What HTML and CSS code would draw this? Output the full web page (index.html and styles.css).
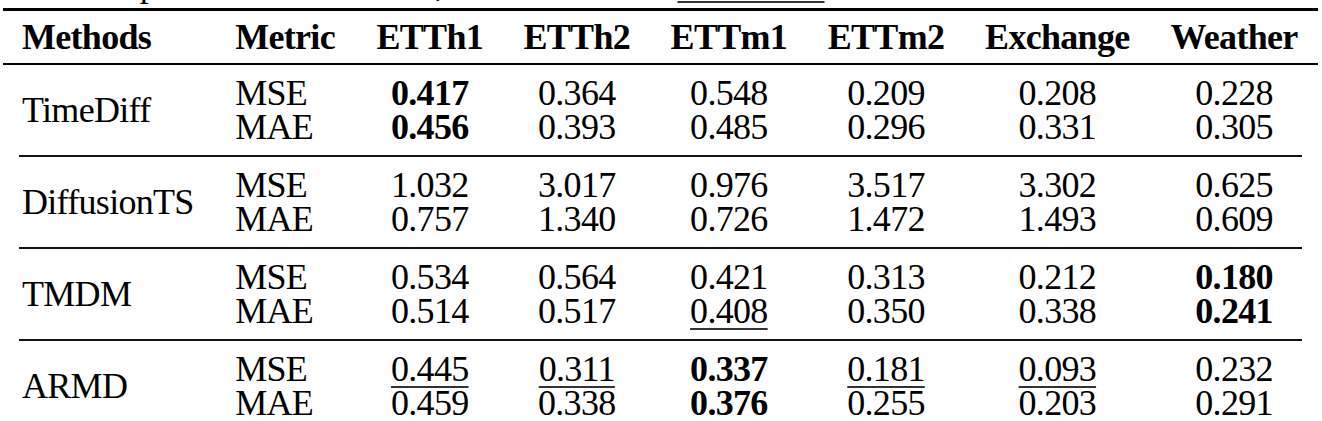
FILE: index.html
```html
<!DOCTYPE html>
<html>
<head>
<meta charset="utf-8">
<title>Results table</title>
<link rel="stylesheet" href="styles.css">
</head>
<body>
<div class="page">
  <p class="caption">tasks compared to the baselines, and second best <u>underlined</u>.</p>
  <table class="results">
    <thead>
      <tr>
        <th class="left">Methods</th>
        <th class="left">Metric</th>
        <th>ETTh1</th>
        <th>ETTh2</th>
        <th>ETTm1</th>
        <th>ETTm2</th>
        <th>Exchange</th>
        <th>Weather</th>
      </tr>
    </thead>
    <tbody>
      <tr class="top">
        <td class="method" rowspan="2">TimeDiff</td>
        <td class="metric">MSE</td>
        <td><b>0.417</b></td><td>0.364</td><td>0.548</td><td>0.209</td><td>0.208</td><td>0.228</td>
      </tr>
      <tr class="bottom">
        <td class="metric">MAE</td>
        <td><b>0.456</b></td><td>0.393</td><td>0.485</td><td>0.296</td><td>0.331</td><td>0.305</td>
      </tr>
      <tr class="sep"><td colspan="8"><div class="rule"></div></td></tr>
      <tr class="top">
        <td class="method" rowspan="2">DiffusionTS</td>
        <td class="metric">MSE</td>
        <td>1.032</td><td>3.017</td><td>0.976</td><td>3.517</td><td>3.302</td><td>0.625</td>
      </tr>
      <tr class="bottom">
        <td class="metric">MAE</td>
        <td>0.757</td><td>1.340</td><td>0.726</td><td>1.472</td><td>1.493</td><td>0.609</td>
      </tr>
      <tr class="sep"><td colspan="8"><div class="rule"></div></td></tr>
      <tr class="top">
        <td class="method" rowspan="2">TMDM</td>
        <td class="metric">MSE</td>
        <td>0.534</td><td>0.564</td><td>0.421</td><td>0.313</td><td>0.212</td><td><b>0.180</b></td>
      </tr>
      <tr class="bottom">
        <td class="metric">MAE</td>
        <td>0.514</td><td>0.517</td><td><u>0.408</u></td><td>0.350</td><td>0.338</td><td><b>0.241</b></td>
      </tr>
      <tr class="sep"><td colspan="8"><div class="rule"></div></td></tr>
      <tr class="top">
        <td class="method" rowspan="2">ARMD</td>
        <td class="metric">MSE</td>
        <td><u>0.445</u></td><td><u>0.311</u></td><td><b>0.337</b></td><td><u>0.181</u></td><td><u>0.093</u></td><td>0.232</td>
      </tr>
      <tr class="bottom">
        <td class="metric">MAE</td>
        <td>0.459</td><td>0.338</td><td><b>0.376</b></td><td>0.255</td><td>0.203</td><td>0.291</td>
      </tr>
    </tbody>
  </table>
</div>
</body>
</html>
```

FILE: styles.css
```css
html, body {
  margin: 0;
  padding: 0;
  background: #ffffff;
  overflow: hidden;
}

.page {
  display: flex;
  flex-direction: column;
  align-items: flex-start;
  font-family: "Liberation Serif", "Times New Roman", serif;
  font-size: 36px;
  line-height: 34px;
  letter-spacing: -0.7px;
  color: #000;
}

.caption {
  margin: -33px 0 7px 3px;
  white-space: nowrap;
}

.caption u,
.results u {
  text-decoration: underline;
  text-decoration-thickness: 1.5px;
  text-decoration-color: #333;
  text-underline-offset: 5px;
}

.results {
  width: 1315px;
  margin-left: 3px;
  border-collapse: collapse;
  border-spacing: 0;
}

.results th,
.results td {
  padding: 0 19px;
  text-align: center;
  white-space: nowrap;
  vertical-align: middle;
}

.results th {
  font-weight: bold;
  border-top: 3px solid #000;
  border-bottom: 2px solid #000;
  padding-top: 9px;
  padding-bottom: 9px;
}

.results th.left,
.results td.method,
.results td.metric {
  text-align: left;
}

.results tr.top td {
  padding-top: 11px;
}

.results tr.bottom td {
  padding-bottom: 11px;
}

.results td.method {
  padding-top: 11px;
  padding-bottom: 11px;
}

.results tr.sep td {
  padding: 0 16px;
  font-size: 0;
  line-height: 0;
}

.results .rule {
  height: 2px;
  background: #111;
}
```
